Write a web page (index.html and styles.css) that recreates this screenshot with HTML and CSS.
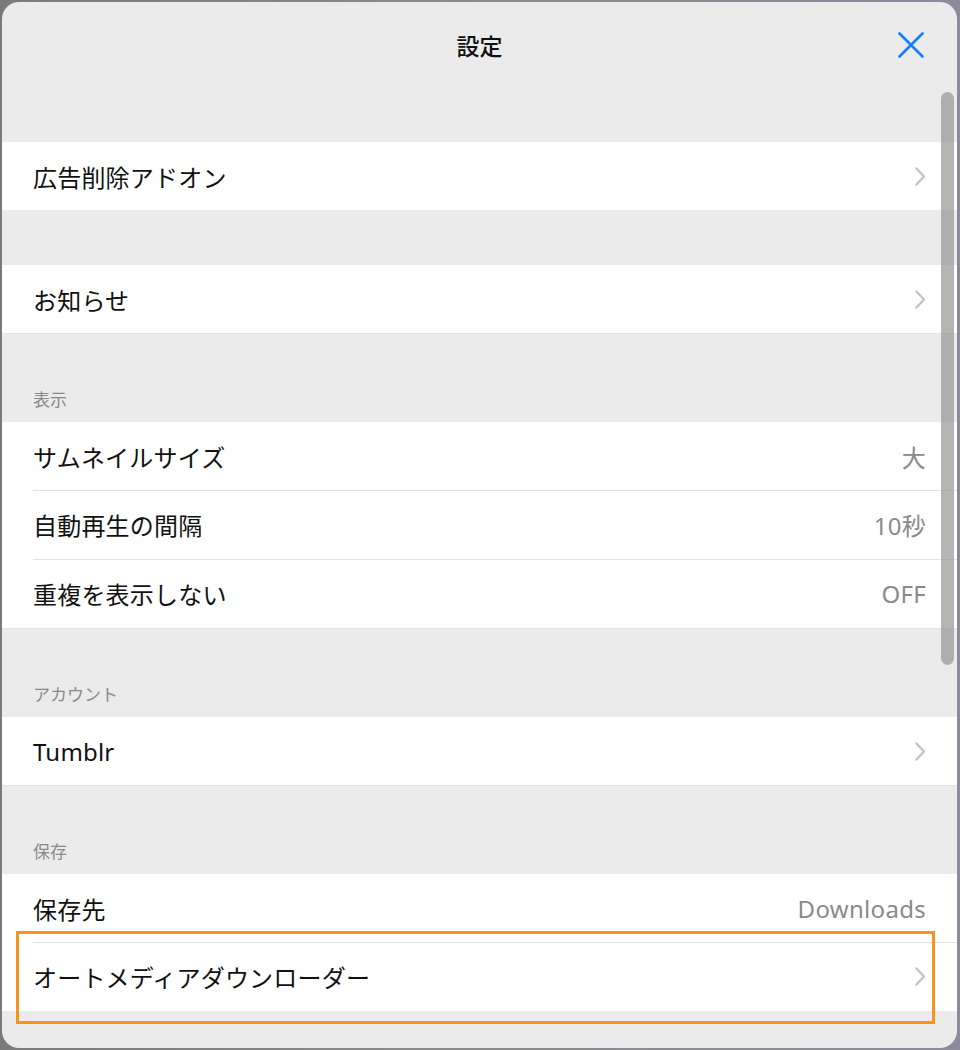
FILE: index.html
```html
<!DOCTYPE html>
<html lang="ja">
<head>
<meta charset="utf-8">
<title>設定</title>
<link rel="stylesheet" href="styles.css">
</head>
<body>
<div class="modal">
  <header class="header">
    <div class="title">設定</div>
    <button class="close" aria-label="閉じる">
      <svg width="26" height="26" viewBox="0 0 26 26"><path d="M1.5 1.5 L24.5 24.5 M24.5 1.5 L1.5 24.5" stroke="#157efb" stroke-width="2.6" stroke-linecap="round" fill="none"/></svg>
    </button>
  </header>
  <div class="content">
    <div class="gap gap-top"></div>
    <div class="group">
      <div class="row"><span class="label">広告削除アドオン</span><svg class="chev" width="11" height="19" viewBox="0 0 11 19"><path d="M1.5 1.5 L9 9.5 L1.5 17.5" stroke="#c4c4c7" stroke-width="2.4" stroke-linecap="round" stroke-linejoin="round" fill="none"/></svg></div>
    </div>
    <div class="gap gap-mid"></div>
    <div class="group">
      <div class="row"><span class="label">お知らせ</span><svg class="chev" width="11" height="19" viewBox="0 0 11 19"><path d="M1.5 1.5 L9 9.5 L1.5 17.5" stroke="#c4c4c7" stroke-width="2.4" stroke-linecap="round" stroke-linejoin="round" fill="none"/></svg></div>
    </div>
    <div class="section section-first">表示</div>
    <div class="group">
      <div class="row"><span class="label">サムネイルサイズ</span><span class="value">大</span></div>
      <div class="row"><span class="label">自動再生の間隔</span><span class="value">10秒</span></div>
      <div class="row"><span class="label">重複を表示しない</span><span class="value">OFF</span></div>
    </div>
    <div class="section">アカウント</div>
    <div class="group">
      <div class="row"><span class="label">Tumblr</span><svg class="chev" width="11" height="19" viewBox="0 0 11 19"><path d="M1.5 1.5 L9 9.5 L1.5 17.5" stroke="#c4c4c7" stroke-width="2.4" stroke-linecap="round" stroke-linejoin="round" fill="none"/></svg></div>
    </div>
    <div class="section">保存</div>
    <div class="group">
      <div class="row"><span class="label">保存先</span><span class="value">Downloads</span></div>
      <div class="row"><span class="label">オートメディアダウンローダー</span><svg class="chev" width="11" height="19" viewBox="0 0 11 19"><path d="M1.5 1.5 L9 9.5 L1.5 17.5" stroke="#c4c4c7" stroke-width="2.4" stroke-linecap="round" stroke-linejoin="round" fill="none"/></svg></div>
    </div>
  </div>
  <div class="scrollbar"></div>
  <div class="mark"></div>
</div>
</body>
</html>
```
FILE: styles.css
```css
html, body {
  margin: 0;
  padding: 0;
}
body {
  width: 960px;
  height: 1050px;
  background: linear-gradient(90deg, #7a7a7a 0%, #8c8c8c 50%, #8d8a9b 100%);
  font-family: "Noto Sans", "Noto Sans CJK JP", sans-serif;
  overflow: hidden;
}
.modal {
  position: relative;
  margin: 2px 0 0 2px;
  width: 955px;
  height: 1046px;
  border-radius: 17px;
  background: #ebebeb;
  overflow: hidden;
}
.header {
  height: 88px;
  display: flex;
  align-items: center;
  justify-content: center;
  position: relative;
}
.title {
  font-size: 23px;
  font-weight: 500;
  color: #111;
  margin-top: -2px;
}
.close {
  position: absolute;
  right: 33px;
  top: 30px;
  width: 26px;
  height: 26px;
  padding: 0;
  border: 0;
  background: none;
  display: block;
}
.close svg { display: block; }
.content {
  display: flex;
  flex-direction: column;
}
.gap-top { height: 52px; flex: none; }
.gap-mid { height: 55px; flex: none; }
.group {
  background: #fff;
  flex: none;
}
.row {
  position: relative;
  height: 68px;
  display: flex;
  align-items: center;
  justify-content: space-between;
  padding: 0 31px;
  box-sizing: border-box;
}
.row + .row {
  height: 69px;
}
.row + .row::before {
  content: "";
  position: absolute;
  left: 31px;
  right: 0;
  top: 0;
  height: 1px;
  background: #e3e3e3;
}
.label {
  font-size: 24px;
  color: #111;
  letter-spacing: 0.2px;
}
.value {
  font-size: 24px;
  color: #8a8a8e;
  letter-spacing: 0.3px;
}
.chev {
  display: block;
  margin-right: 0;
}
.section {
  flex: none;
  height: 89px;
  display: flex;
  align-items: flex-end;
  padding: 0 0 11px 31px;
  box-sizing: border-box;
  font-size: 17px;
  color: #8a8a8a;
  border-top: 1px solid #e2e2e2;
}
.mark {
  position: absolute;
  left: 14px;
  top: 929px;
  width: 919px;
  height: 93px;
  border: 3px solid #f8941c;
  box-sizing: border-box;
}
.scrollbar {
  position: absolute;
  left: 939px;
  top: 90px;
  width: 13px;
  height: 573px;
  border-radius: 7px;
  background: rgba(150, 150, 150, 0.7);
}
```
